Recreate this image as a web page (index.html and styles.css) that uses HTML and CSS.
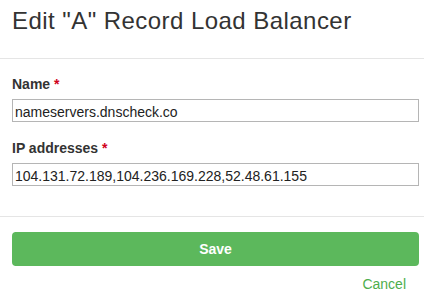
FILE: index.html
```html
<!DOCTYPE html>
<html lang="en">
<head>
<meta charset="utf-8">
<title>Edit "A" Record Load Balancer</title>
<link rel="stylesheet" href="styles.css">
</head>
<body>
<div class="modal">
  <div class="modal-header">
    <h1 class="modal-title">Edit "A" Record Load Balancer</h1>
  </div>
  <form class="modal-body">
    <div class="field">
      <label class="field-label" for="name">Name <span class="req">*</span></label>
      <input class="field-input" id="name" type="text" value="nameservers.dnscheck.co">
    </div>
    <div class="field">
      <label class="field-label" for="ips">IP addresses <span class="req">*</span></label>
      <input class="field-input" id="ips" type="text" value="104.131.72.189,104.236.169.228,52.48.61.155">
    </div>
  </form>
  <div class="modal-footer">
    <button class="btn-save" type="button">Save</button>
    <div class="cancel-row"><a class="btn-cancel" href="#">Cancel</a></div>
  </div>
</div>
</body>
</html>
```
FILE: styles.css
```css
html, body {
  margin: 0;
  padding: 0;
  background: #fff;
}
body {
  font-family: "Liberation Sans", Arial, Helvetica, sans-serif;
  color: #333;
  font-size: 14px;
}
.modal {
  width: 424px;
}
.modal-header {
  padding: 8px 5px 24px 12px;
  border-bottom: 1px solid #e5e5e5;
}
.modal-title {
  margin: 0;
  font-size: 24px;
  line-height: 26px;
  font-weight: normal;
  letter-spacing: 0.45px;
  color: #333;
}
.modal-body {
  margin: 0;
  padding: 15px 5px 30px 12px;
  border-bottom: 1px solid #e5e5e5;
  display: flex;
  flex-direction: column;
  gap: 16px;
}
.field {
  display: flex;
  flex-direction: column;
}
.field-label {
  font-weight: bold;
  font-size: 14px;
  line-height: 20px;
  margin-bottom: 5px;
  color: #333;
}
.req {
  color: #d0021b;
}
.field-input {
  box-sizing: border-box;
  height: 23px;
  margin: 0;
  padding: 2px 2px 0;
  line-height: 19px;
  font-family: "Liberation Sans", Arial, Helvetica, sans-serif;
  font-size: 14px;
  color: #222;
  border: 1px solid #b5b5b5;
  border-radius: 0;
  background: #fff;
  outline: none;
}
.modal-footer {
  padding: 15px 5px 0 12px;
}
.btn-save {
  display: block;
  width: 100%;
  height: 34px;
  margin: 0;
  padding: 0;
  border: none;
  border-radius: 4px;
  background: #5cb85c;
  color: #fff;
  font-family: "Liberation Sans", Arial, Helvetica, sans-serif;
  font-size: 14px;
  font-weight: bold;
  line-height: 34px;
}
.cancel-row {
  display: flex;
  justify-content: flex-end;
  padding-top: 8px;
}
.btn-cancel {
  color: #4cae4c;
  text-decoration: none;
  font-size: 14px;
  line-height: 20px;
  padding-right: 13px;
}
```
